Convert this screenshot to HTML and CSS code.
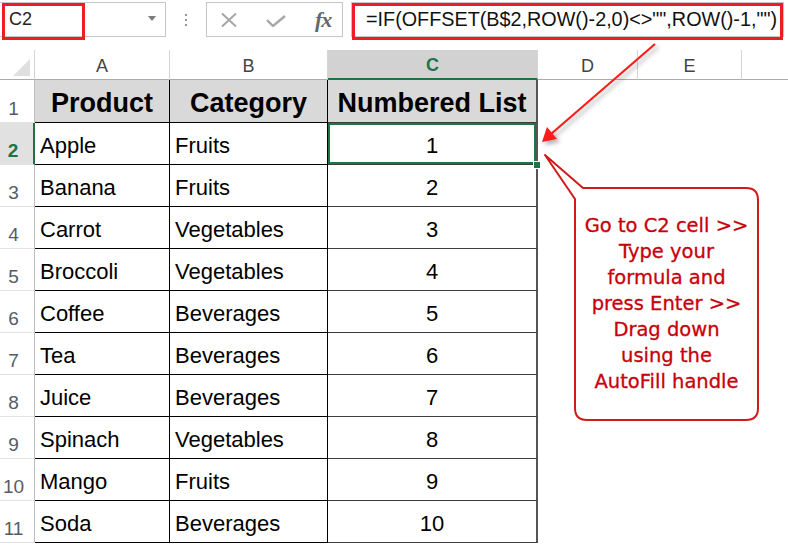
FILE: index.html
```html
<!DOCTYPE html>
<html>
<head>
<meta charset="utf-8">
<link rel="stylesheet" href="styles.css">
</head>
<body>
<div class="app">
  <div class="toolbar">
    <div class="namebox">
      <span class="ref">C2</span>
      <span class="caret"></span>
      <span class="hl hl-name"></span>
    </div>
    <div class="grip"><i></i><i></i><i></i></div>
    <div class="fbtns">
      <svg class="ico" width="18" height="14" viewBox="0 0 18 14"><path d="M2 0.5 L16 13.5 M16 0.5 L2 13.5" stroke="#a6a6a6" stroke-width="2" fill="none"/></svg>
      <svg class="ico" width="20" height="12" viewBox="0 0 20 12"><path d="M1 5 L7 11 L19 1" stroke="#a6a6a6" stroke-width="2.4" fill="none"/></svg>
      <span class="fx">fx</span>
    </div>
    <div class="formula">
      <span class="ftext">=IF(OFFSET(B$2,ROW()-2,0)&lt;&gt;"",ROW()-1,"")</span>
      <span class="hl hl-formula"></span>
    </div>
  </div>

  <div class="sheet">
    <div class="corner"><span class="tri"></span></div>
    <div class="ch">A</div>
    <div class="ch">B</div>
    <div class="ch ch-sel">C</div>
    <div class="ch">D</div>
    <div class="ch">E</div>
    <div class="ch ch-last"></div>

    <div class="rh">1</div>
    <div class="c hd">Product</div>
    <div class="c hd">Category</div>
    <div class="c hd n">Numbered List</div>
    <div class="e"></div><div class="e"></div><div class="e"></div>

    <div class="rh rh-sel">2</div>
    <div class="c">Apple</div>
    <div class="c">Fruits</div>
    <div class="c n sel">1<span class="handle"></span></div>
    <div class="e"></div><div class="e"></div><div class="e"></div>

    <div class="rh">3</div>
    <div class="c">Banana</div>
    <div class="c">Fruits</div>
    <div class="c n">2</div>
    <div class="e"></div><div class="e"></div><div class="e"></div>

    <div class="rh">4</div>
    <div class="c">Carrot</div>
    <div class="c">Vegetables</div>
    <div class="c n">3</div>
    <div class="e"></div><div class="e"></div><div class="e"></div>

    <div class="rh">5</div>
    <div class="c">Broccoli</div>
    <div class="c">Vegetables</div>
    <div class="c n">4</div>
    <div class="e"></div><div class="e"></div><div class="e"></div>

    <div class="rh">6</div>
    <div class="c">Coffee</div>
    <div class="c">Beverages</div>
    <div class="c n">5</div>
    <div class="e"></div><div class="e"></div><div class="e"></div>

    <div class="rh">7</div>
    <div class="c">Tea</div>
    <div class="c">Beverages</div>
    <div class="c n">6</div>
    <div class="e"></div><div class="e"></div><div class="e"></div>

    <div class="rh">8</div>
    <div class="c">Juice</div>
    <div class="c">Beverages</div>
    <div class="c n">7</div>
    <div class="e"></div><div class="e"></div><div class="e"></div>

    <div class="rh">9</div>
    <div class="c">Spinach</div>
    <div class="c">Vegetables</div>
    <div class="c n">8</div>
    <div class="e"></div><div class="e"></div><div class="e"></div>

    <div class="rh">10</div>
    <div class="c">Mango</div>
    <div class="c">Fruits</div>
    <div class="c n">9</div>
    <div class="e"></div><div class="e"></div><div class="e"></div>

    <div class="rh">11</div>
    <div class="c">Soda</div>
    <div class="c">Beverages</div>
    <div class="c n">10</div>
    <div class="e"></div><div class="e"></div><div class="e"></div>
  </div>

  <svg class="overlay" width="788" height="550" viewBox="0 0 788 550">
    <defs>
      <filter id="sh" x="-20%" y="-20%" width="140%" height="140%">
        <feDropShadow dx="3" dy="3" stdDeviation="2" flood-color="#000" flood-opacity="0.3"/>
      </filter>
    </defs>
    <g filter="url(#sh)">
      <line x1="655" y1="44" x2="551" y2="134" stroke="#ff1a1a" stroke-width="2.2"/>
      <polygon points="542,142 547,127 557,139" fill="#ff1a1a"/>
    </g>
    <path class="bubble" d="M545 155 L583 188 L746 188 Q758 188 758 200 L758 408 Q758 420 746 420 L587 420 Q575 420 575 408 L575 199 Z"/>
  </svg>
  <div class="callout">
    <p>Go to C2 cell &gt;&gt;<br>Type your<br>formula and<br>press Enter &gt;&gt;<br>Drag down<br>using the<br>AutoFill handle</p>
  </div>
</div>
</body>
</html>
```

FILE: styles.css
```css
* { box-sizing: border-box; }
html, body { margin: 0; padding: 0; background: #fff; }
body { font-family: "Liberation Sans", Arial, sans-serif; color: #000; }

.app { position: relative; width: 788px; height: 550px; overflow: hidden; }

.toolbar {
  height: 50px;
  display: flex;
  align-items: flex-start;
  padding-top: 2px;
}
.namebox {
  position: relative;
  width: 167px;
  height: 35px;
  margin-left: -1px;
  border: 1px solid #c6c6c6;
  display: flex;
  align-items: center;
  padding-left: 9px;
}
.ref { font-size: 18px; color: #222; flex: 1; }
.caret {
  width: 0; height: 0;
  border-left: 4.5px solid transparent;
  border-right: 4.5px solid transparent;
  border-top: 5px solid #7a7a7a;
  margin-right: 9px;
  margin-top: -2px;
}
.hl { position: absolute; border: 3px solid #ee1c25; }
.hl-name { left: 2px; top: 0px; width: 83px; height: 37px; }

.grip {
  width: 40px;
  height: 35px;
  display: flex;
  flex-direction: column;
  align-items: center;
  justify-content: center;
  gap: 3px;
}
.grip i { display: block; width: 2px; height: 2px; background: #9a9a9a; }

.fbtns {
  width: 137px;
  height: 35px;
  border: 1px solid #c6c6c6;
  display: flex;
  align-items: center;
  padding-left: 13px;
  gap: 28px;
}
.fbtns .ico { display: block; }
.fbtns .ico:nth-child(2) { margin-top: 3px; }
.fx {
  font-family: "Liberation Serif", "Times New Roman", serif;
  font-style: italic;
  font-weight: bold;
  font-size: 22px;
  color: #666;
  letter-spacing: -1px;
  margin-left: 1px;
}

.formula {
  position: relative;
  flex: 1;
  height: 35px;
  margin-left: 8px;
  margin-right: 4px;
  border: 1px solid #c6c6c6;
  display: flex;
  align-items: center;
  padding-left: 14px;
}
.ftext { font-size: 19.8px; color: #111; white-space: nowrap; }
.hl-formula { left: 0; top: 0; right: 0; height: 37px; }

.sheet {
  display: grid;
  grid-template-columns: 35px 135px 158px 210px 100px 104px 46px;
  grid-template-rows: 30px 43px repeat(10, 42px);
}

.corner {
  position: relative;
  border-right: 1px solid #d4d4d4;
  border-bottom: 1px solid #ababab;
}
.tri {
  position: absolute;
  right: 4px; bottom: 3px;
  width: 0; height: 0;
  border-left: 17px solid transparent;
  border-bottom: 17px solid #dfdfdf;
}
.ch {
  display: flex;
  align-items: center;
  justify-content: center;
  font-size: 18px;
  color: #444;
  border-right: 1px solid #d4d4d4;
  border-bottom: 1px solid #ababab;
  padding-top: 3px;
}
.ch-last { border-right: none; }
.ch-sel {
  background: #d2d2d2;
  color: #217346;
  font-weight: bold;
  border-bottom: 2px solid #217346;
}

.rh {
  display: flex;
  align-items: flex-end;
  justify-content: center;
  padding-right: 7px;
  padding-bottom: 3px;
  font-size: 19px;
  line-height: 20px;
  color: #555b66;
  border-right: 1px solid #bdbdbd;
  border-bottom: 1px solid #e3e3e3;
}
.rh-sel {
  background: #e1e1e1;
  color: #217346;
  font-weight: bold;
  border-right: 2px solid #217346;
}

.c {
  display: flex;
  align-items: center;
  padding-left: 5px;
  padding-top: 4px;
  font-size: 22px;
  border-right: 1px solid #000;
  border-bottom: 1px solid #000;
  white-space: nowrap;
}
.c.hd {
  background: #d9d9d9;
  font-weight: bold;
  font-size: 27px;
  justify-content: center;
  padding-left: 0;
  padding-top: 5px;
}
.c.n {
  justify-content: center;
  padding-left: 0;
  border-right: 2px solid #555;
  border-bottom-color: #3c3c3c;
}
.c.sel {
  position: relative;
  box-shadow: inset 0 0 0 2px #217346;
}
.handle {
  position: absolute;
  right: -5px;
  bottom: -5px;
  width: 8px;
  height: 8px;
  background: #217346;
  border: 1px solid #fff;
}

.e { }

.overlay { position: absolute; left: 0; top: 0; pointer-events: none; }
.bubble {
  fill: #fff;
  stroke: #d11a1a;
  stroke-width: 2;
  stroke-linejoin: round;
}

.callout {
  position: absolute;
  left: 575px;
  top: 188px;
  width: 183px;
  height: 232px;
  display: flex;
  align-items: center;
  justify-content: center;
}
.callout p {
  margin: 0;
  text-align: center;
  font-family: "DejaVu Sans", Verdana, sans-serif;
  font-size: 19.5px;
  line-height: 26px;
  color: #c8000a;
  white-space: nowrap;
  -webkit-text-stroke: 0.3px #c8000a;
}
```
